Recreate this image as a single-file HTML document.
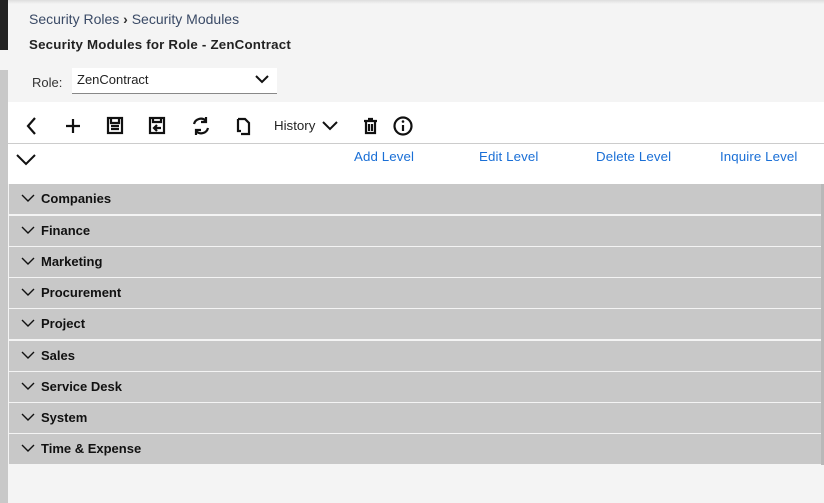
<!DOCTYPE html>
<html><head><style>
*{margin:0;padding:0;box-sizing:border-box}
body{width:824px;height:503px;background:#f4f4f4;font-family:"Liberation Sans",Roboto,sans-serif;position:relative;overflow:hidden;color:#222}
.abs{position:absolute}
.row{position:absolute;left:9px;width:812px;height:30px;background:#c8c8c8;font-weight:bold;font-size:13px;line-height:30px;padding-left:32px;color:#111}
.row svg{position:absolute;left:12px;top:10px}
.lnk{position:absolute;top:149px;color:#1a6fd6;font-size:13.3px;letter-spacing:0.1px}
</style></head><body>
<div class="abs" style="left:0;top:0;width:8px;height:50px;background:#222"></div>
<div class="abs" style="left:0;top:70px;width:8px;height:433px;background:#c8c8c8"></div>
<div class="abs" style="left:8px;top:0;width:816px;height:4px;background:linear-gradient(#ddd,#f4f4f4)"></div>
<div class="abs" style="left:29px;top:11px;font-size:14px;color:#3a4a66">Security Roles <span style="font-weight:bold;color:#333">&#8250;</span> Security Modules</div>
<div class="abs" style="left:29px;top:37px;font-size:13.3px;font-weight:bold;color:#222;letter-spacing:0.2px">Security Modules for Role - ZenContract</div>
<div class="abs" style="left:32px;top:75px;font-size:13px;color:#333">Role:</div>
<div class="abs" style="left:72px;top:68px;width:205px;height:26px;background:#fff;border-bottom:1px solid #888;font-size:13px;padding:4px 0 0 5px">ZenContract
<svg class="abs" style="left:183px;top:7px" width="14" height="9" viewBox="0 0 14 9"><path d="M1 1l6 6 6-6" fill="none" stroke="#111" stroke-width="2"/></svg></div>
<div class="abs" style="left:8px;top:102px;width:816px;height:82px;background:#fff"></div>
<div class="abs" style="left:8px;top:143px;width:816px;height:1px;background:#ccc"></div>
<svg class="abs" style="left:20px;top:114px" width="400" height="24" viewBox="0 0 400 24">
<g fill="none" stroke="#111" stroke-width="2.2">
<path d="M15 4l-7 8 7 8"/>
<path d="M53 5v14M46 12h14"/>
<rect x="88" y="4" width="14" height="15"/><path d="M91 4v5h8V4M91 12h8M91 15h8"/>
<rect x="130" y="4" width="14" height="15"/><path d="M133 4v4h8V4M141 14h-6M137 11l-3 3 3 3"/>
<path d="M174 10a7 7 0 0 1 12-3M188 14a7 7 0 0 1-12 3"/><path d="M186 3v5h-5M176 21v-5h5"/>
<path d="M218 5h7l4 4v11h-8M218 5v12h3"/>
<path d="M346 8v11h9V8M344 7h13M348 5h5M349 10v7M352 10v7"/>
<circle cx="383" cy="12" r="8.5"/><path d="M383 11v6"/>
</g><circle cx="383" cy="7.5" r="1.3" fill="#111"/></svg>
<div class="abs" style="left:274px;top:118px;font-size:13.3px;color:#222">History</div>
<svg class="abs" style="left:322px;top:121px" width="16" height="10"><path d="M1 1l7 7 7-7" fill="none" stroke="#111" stroke-width="2"/></svg>
<svg class="abs" style="left:16px;top:154px" width="20" height="12"><path d="M1 1l9 9 9-9" fill="none" stroke="#111" stroke-width="2"/></svg>
<div class="lnk" style="left:354px">Add Level</div>
<div class="lnk" style="left:479px">Edit Level</div>
<div class="lnk" style="left:596px">Delete Level</div>
<div class="lnk" style="left:720px">Inquire Level</div>
<div class="abs" style="left:821px;top:184px;width:3px;height:281px;background:#b8b8b8"></div>
<div class="row" style="top:184px"><svg width="14" height="9"><path d="M1 1l6 6 6-6" fill="none" stroke="#111" stroke-width="1.4"/></svg>Companies</div>
<div class="row" style="top:216px"><svg width="14" height="9"><path d="M1 1l6 6 6-6" fill="none" stroke="#111" stroke-width="1.4"/></svg>Finance</div>
<div class="row" style="top:247px"><svg width="14" height="9"><path d="M1 1l6 6 6-6" fill="none" stroke="#111" stroke-width="1.4"/></svg>Marketing</div>
<div class="row" style="top:278px"><svg width="14" height="9"><path d="M1 1l6 6 6-6" fill="none" stroke="#111" stroke-width="1.4"/></svg>Procurement</div>
<div class="row" style="top:309px"><svg width="14" height="9"><path d="M1 1l6 6 6-6" fill="none" stroke="#111" stroke-width="1.4"/></svg>Project</div>
<div class="row" style="top:341px"><svg width="14" height="9"><path d="M1 1l6 6 6-6" fill="none" stroke="#111" stroke-width="1.4"/></svg>Sales</div>
<div class="row" style="top:372px"><svg width="14" height="9"><path d="M1 1l6 6 6-6" fill="none" stroke="#111" stroke-width="1.4"/></svg>Service Desk</div>
<div class="row" style="top:403px"><svg width="14" height="9"><path d="M1 1l6 6 6-6" fill="none" stroke="#111" stroke-width="1.4"/></svg>System</div>
<div class="row" style="top:434px"><svg width="14" height="9"><path d="M1 1l6 6 6-6" fill="none" stroke="#111" stroke-width="1.4"/></svg>Time &amp; Expense</div>
</body></html>
